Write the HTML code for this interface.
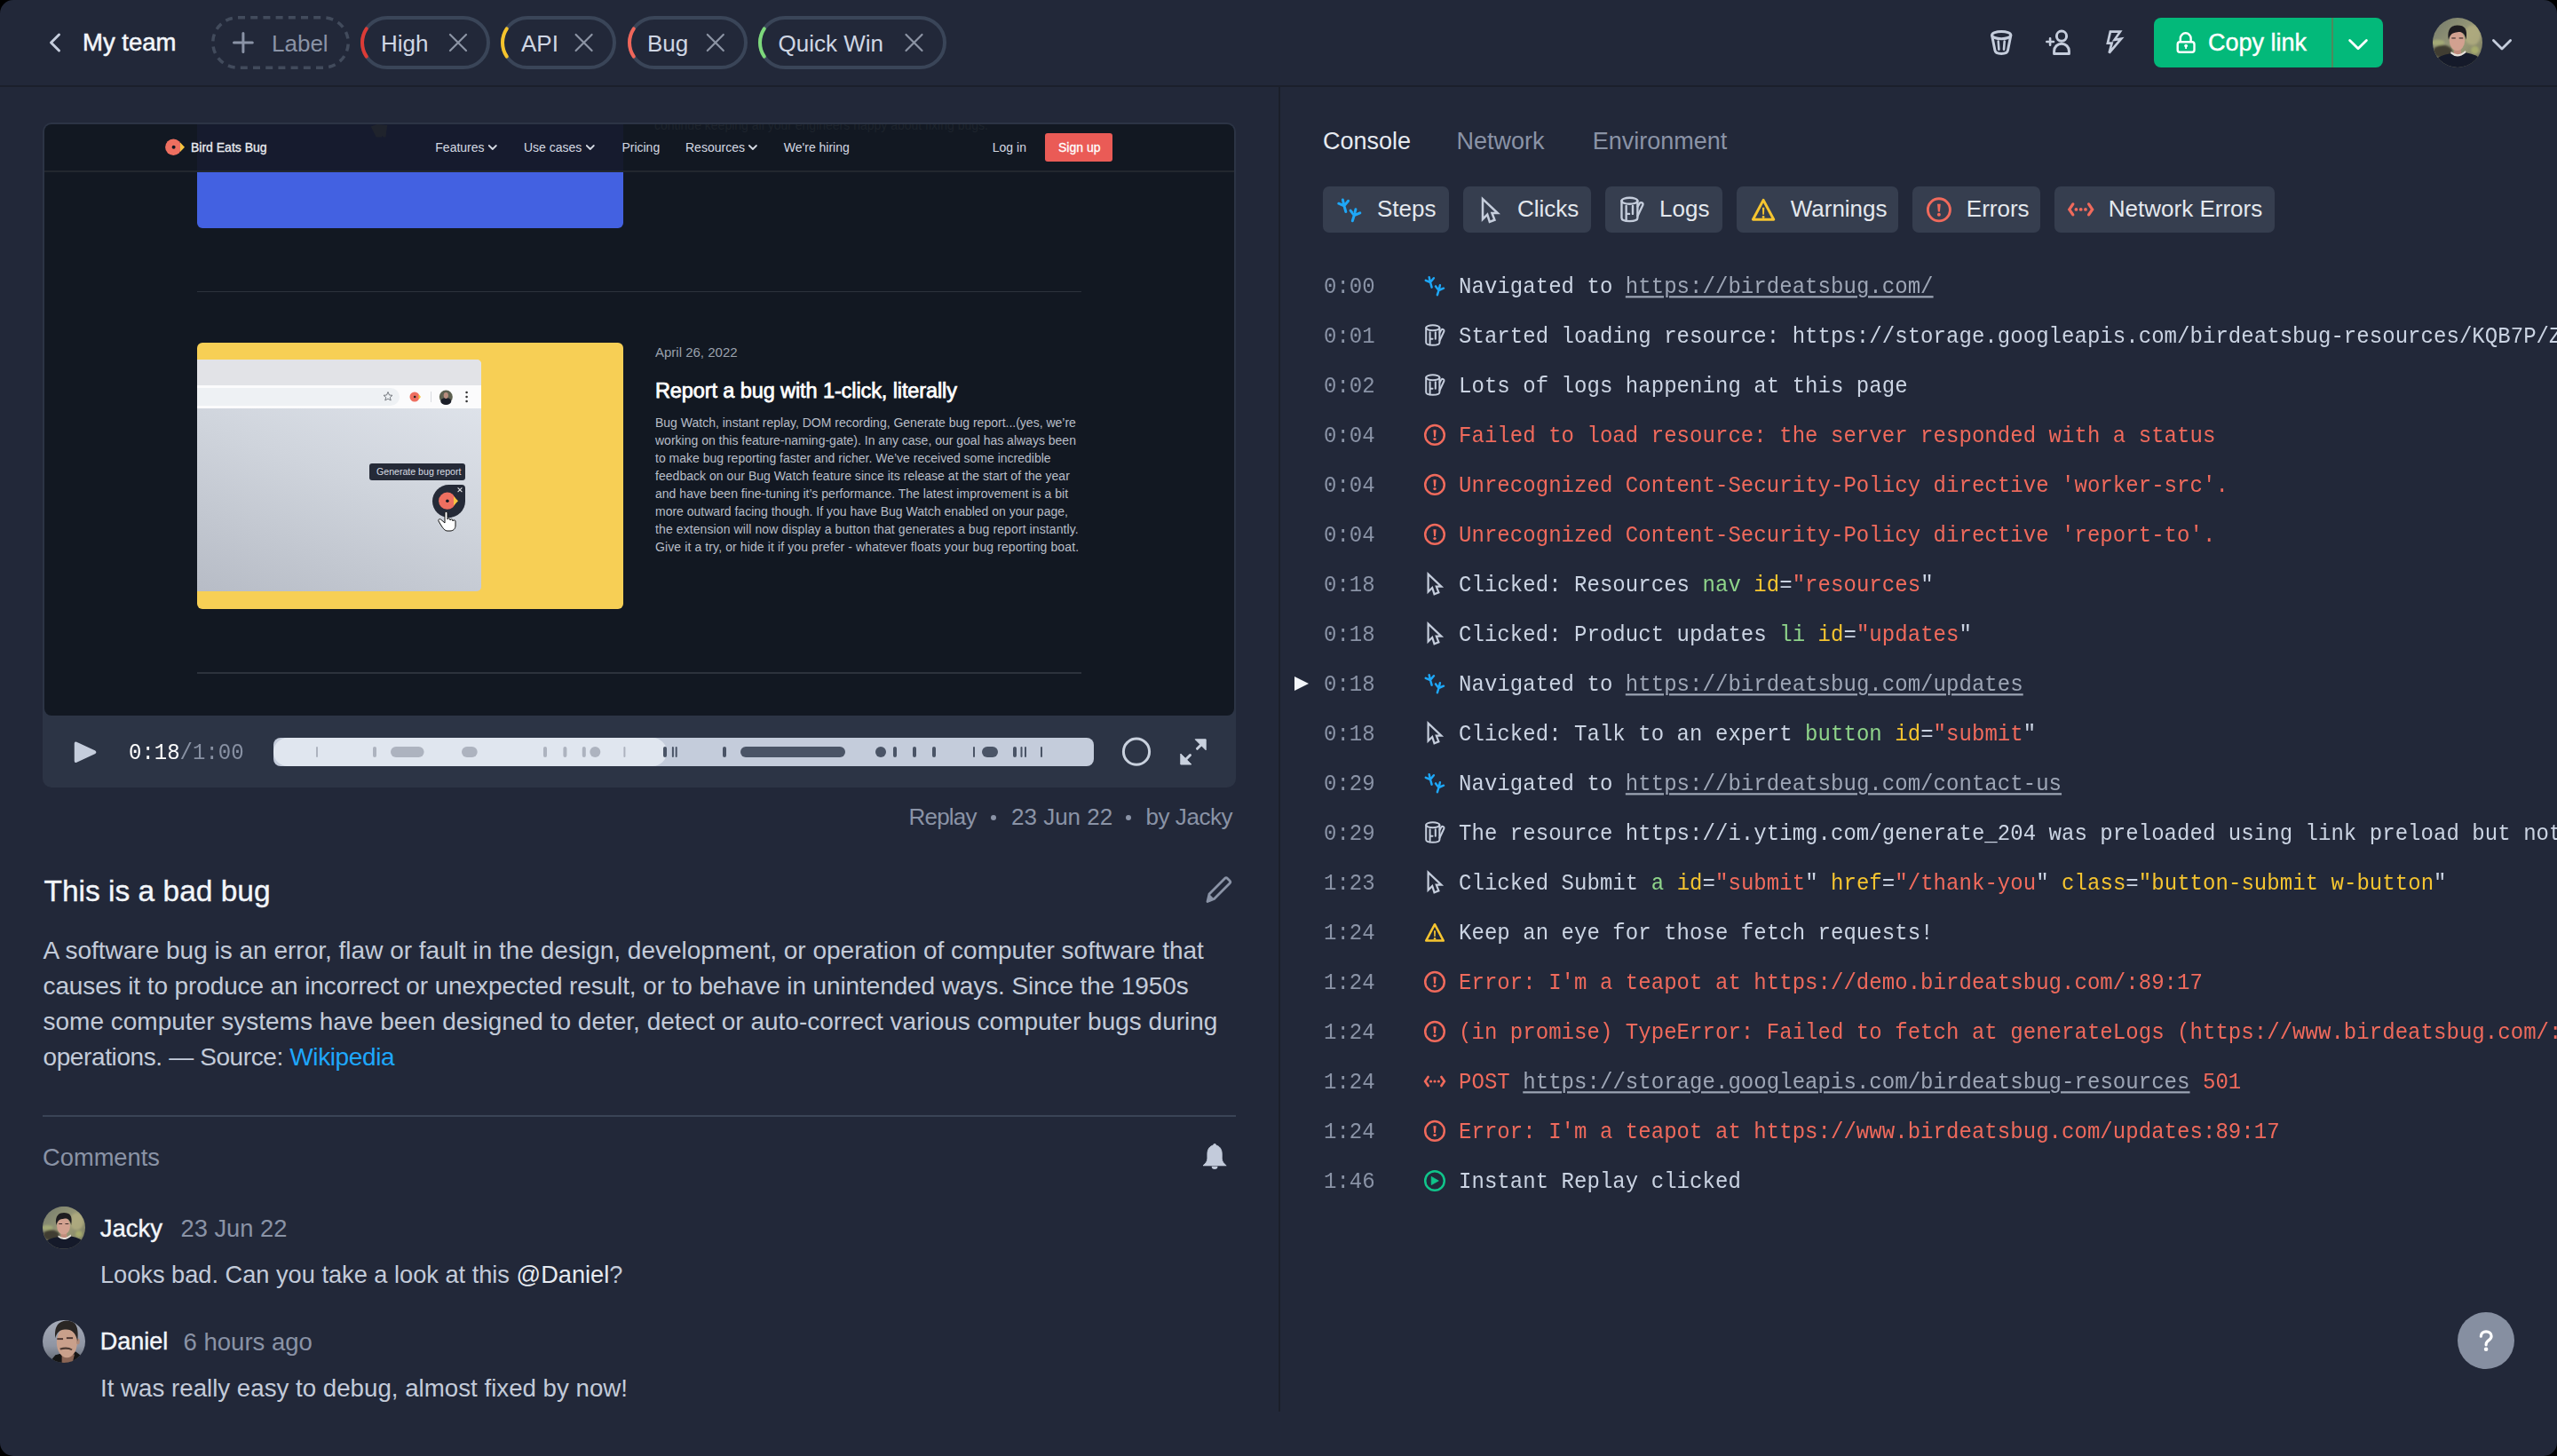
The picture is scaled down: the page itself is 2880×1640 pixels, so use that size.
<!DOCTYPE html>
<html><head><meta charset="utf-8">
<style>
*{margin:0;padding:0;box-sizing:border-box}
html,body{width:2880px;height:1640px;background:#000;overflow:hidden}
body{font-family:"Liberation Sans",sans-serif;position:relative}
#app{position:absolute;left:0;top:0;width:2880px;height:1640px;background:#222839;border-radius:15px;overflow:hidden}
.abs{position:absolute}
.t{position:absolute;white-space:nowrap;line-height:1}
svg.ov{position:absolute;left:0;top:0}
</style></head>
<body><div id="app">
<div class="abs" style="left:0px;top:96px;width:2880px;height:2px;background:#1b1f2b;"></div>
<div class="t" style="left:93.0px;top:34.2px;font-size:27.5px;color:#f3f6fa;-webkit-text-stroke:0.5px #f3f6fa;">My team</div>
<div class="t" style="left:306.0px;top:35.5px;font-size:26px;color:#8a93a6;">Label</div>
<div class="t" style="left:429.0px;top:35.5px;font-size:26px;color:#cfd6e3;">High</div>
<div class="t" style="left:587.0px;top:35.5px;font-size:26px;color:#cfd6e3;">API</div>
<div class="t" style="left:729.0px;top:35.5px;font-size:26px;color:#cfd6e3;">Bug</div>
<div class="t" style="left:876.5px;top:35.5px;font-size:26px;color:#cfd6e3;">Quick Win</div>
<svg class="ov" width="2880" height="100" viewBox="0 0 2880 100">
<path d="M66.5 39 L57.5 48 L66.5 57" fill="none" stroke="#c5cddc" stroke-width="3" stroke-linecap="round" stroke-linejoin="round"/>
<rect x="239.75" y="19.75" width="152.5" height="56.5" rx="28.25" fill="none" stroke="#424b5c" stroke-width="3.5" stroke-dasharray="8 6.2"/>
<path d="M273.9 37.5 V58.5 M263.5 48 H284.3" stroke="#8a93a6" stroke-width="3" stroke-linecap="round"/>
<rect x="408" y="20" width="142" height="56" rx="28" fill="none" stroke="#3a4558" stroke-width="4"/>
<path d="M412.79 32.34 A28 28 0 0 0 412.79 63.66" fill="none" stroke="#dc3b36" stroke-width="4" stroke-linecap="round"/>
<path d="M507 39 L525 57 M525 39 L507 57" stroke="#8c94a4" stroke-width="2.2" stroke-linecap="round"/>
<rect x="566" y="20" width="126" height="56" rx="28" fill="none" stroke="#3a4558" stroke-width="4"/>
<path d="M570.79 32.34 A28 28 0 0 0 570.79 63.66" fill="none" stroke="#f6c42c" stroke-width="4" stroke-linecap="round"/>
<path d="M648.6 39 L666.6 57 M666.6 39 L648.6 57" stroke="#8c94a4" stroke-width="2.2" stroke-linecap="round"/>
<rect x="709" y="20" width="131" height="56" rx="28" fill="none" stroke="#3a4558" stroke-width="4"/>
<path d="M713.79 32.34 A28 28 0 0 0 713.79 63.66" fill="none" stroke="#f0665a" stroke-width="4" stroke-linecap="round"/>
<path d="M796.8 39 L814.8 57 M814.8 39 L796.8 57" stroke="#8c94a4" stroke-width="2.2" stroke-linecap="round"/>
<rect x="856" y="20" width="208" height="56" rx="28" fill="none" stroke="#3a4558" stroke-width="4"/>
<path d="M860.79 32.34 A28 28 0 0 0 860.79 63.66" fill="none" stroke="#7dd87b" stroke-width="4" stroke-linecap="round"/>
<path d="M1020.5 39 L1038.5 57 M1038.5 39 L1020.5 57" stroke="#8c94a4" stroke-width="2.2" stroke-linecap="round"/>
<ellipse cx="2254.2" cy="39.6" rx="10.6" ry="4.1" fill="none" stroke="#c5cddc" stroke-width="3"/>
<path d="M2243.6 40 L2246.9 56.5 C2247.4 59.8 2250.5 60.4 2254.2 60.4 C2257.9 60.4 2261 59.8 2261.5 56.5 L2264.8 40" fill="none" stroke="#c5cddc" stroke-width="3" stroke-linecap="round"/>
<path d="M2250.7 46.5 L2251.4 55.6 M2257.7 46.5 L2257 55.6" stroke="#c5cddc" stroke-width="2.6" stroke-linecap="round"/>
<path d="M2305.3 47 H2313 M2309.1 43.2 V50.8" stroke="#c5cddc" stroke-width="2.6" stroke-linecap="round"/>
<circle cx="2322" cy="40.7" r="5.6" fill="none" stroke="#c5cddc" stroke-width="3"/>
<path d="M2313.6 60.4 L2313.6 57.6 A8.4 8.4 0 0 1 2330.4 57.6 L2330.4 60.4 Z" fill="none" stroke="#c5cddc" stroke-width="3" stroke-linejoin="round"/>
<path d="M2376.9 35.7 L2388 35.7 L2381.6 44.8 L2389.2 43.6 L2375.6 59.6 L2378.6 48.6 L2373.9 48.6 Z" fill="none" stroke="#c5cddc" stroke-width="2.7" stroke-linejoin="miter"/>
</svg>
<div class="abs" style="left:2426px;top:20px;width:258px;height:56px;background:#03b97a;border-radius:8px;"></div>
<div class="abs" style="left:2626px;top:20px;width:2px;height:56px;background:#4e8a5c;"></div>
<div class="t" style="left:2487.0px;top:34.9px;font-size:27px;color:#ffffff;-webkit-text-stroke:0.4px #fff;">Copy link</div>
<svg class="ov" width="2880" height="100" viewBox="0 0 2880 100">
<path d="M2455.8 46.5 V43.2 A5.9 5.9 0 0 1 2467.6 43.2 V46.5" fill="none" stroke="#fff" stroke-width="2.4"/>
<rect x="2452.7" y="47.3" width="18.8" height="11.5" rx="2.6" fill="none" stroke="#fff" stroke-width="2.4"/>
<circle cx="2462.1" cy="51.6" r="1.9" fill="#fff"/><rect x="2461.2" y="51.6" width="1.8" height="3.4" fill="#fff"/>
<path d="M2646.6 45.4 L2656 54.8 L2665.4 45.4" fill="none" stroke="#fff" stroke-width="2.8" stroke-linecap="round" stroke-linejoin="round"/>
<path d="M2808.4 45.4 L2818 55 L2827.6 45.4" fill="none" stroke="#c5cddc" stroke-width="2.8" stroke-linecap="round" stroke-linejoin="round"/>
<defs><clipPath id="chdr"><circle cx="2768" cy="48" r="28"/></clipPath><linearGradient id="ghdr" x1="0" y1="0" x2="1" y2="1"><stop offset="0" stop-color="#747a6c"/><stop offset="0.55" stop-color="#9c9c78"/><stop offset="1" stop-color="#6f7158"/></linearGradient><filter id="fhdr" x="-0.2" y="-0.2" width="1.4" height="1.4"><feGaussianBlur stdDeviation="1.12"/></filter></defs><g clip-path="url(#chdr)"><rect x="2740" y="20" width="56" height="56" fill="url(#ghdr)"/><g filter="url(#fhdr)"><ellipse cx="2784.80" cy="39.60" rx="8.96" ry="11.20" fill="#b1ad80" opacity="0.8"/><ellipse cx="2745.60" cy="48.00" rx="7.84" ry="3.36" fill="#a9b078" opacity="0.8"/><ellipse cx="2751.20" cy="58.08" rx="11.20" ry="7.28" fill="#403d30"/><ellipse cx="2787.60" cy="56.40" rx="4.48" ry="4.48" fill="#adb36e" opacity="0.8"/></g><path d="M2764.64 53.60 L2771.36 53.60 L2772.48 61.44 L2763.52 61.44 Z" fill="#c08c7c"/><path d="M2760.72 58.08 Q2768.00 64.80 2776.96 56.96 L2778.08 62.00 Q2768.00 68.16 2759.60 62.56 Z" fill="#e6e0da"/><path d="M2740.00 76.00 L2742.80 67.60 Q2746.72 62.56 2760.16 60.32 Q2768.00 67.04 2777.52 59.20 Q2790.40 61.44 2796.00 68.16 L2796.00 76.00 Z" fill="#151a2a"/><ellipse cx="2767.44" cy="45.76" rx="8.68" ry="11.20" fill="#d2a190"/><path d="M2757.92 44.64 C2755.68 31.20 2762.40 28.40 2768.00 28.40 C2775.84 28.40 2779.76 32.32 2777.52 44.64 C2775.84 36.80 2772.48 35.68 2768.00 36.24 C2762.40 36.80 2759.60 38.48 2757.92 44.64 Z" fill="#1e1c20"/><rect x="2761.28" y="42.40" width="4.48" height="1.12" fill="#3a2a28"/><rect x="2769.68" y="42.40" width="4.48" height="1.12" fill="#3a2a28"/></g>
</svg>
<div class="abs" style="left:48px;top:138px;width:1344px;height:749px;background:#2c3445;border-radius:10px;"></div>
<div class="abs" style="left:50px;top:140px;width:1340px;height:666px;background:#121822;border-radius:8px;overflow:hidden">
<div class="abs" style="left:172px;top:0px;width:480px;height:52px;background:#161b2e;"></div>
<div class="t" style="left:687.0px;top:-5.9px;font-size:14px;color:#1d232c;">continue keeping all your engineers happy about fixing bugs.</div>
<div class="abs" style="left:0px;top:52px;width:1340px;height:2px;background:#22272f;"></div>
<div class="abs" style="left:172px;top:54px;width:480px;height:63px;background:#4361e1;border-radius:0 0 6px 6px;"></div>
<div class="abs" style="left:172px;top:187.5px;width:996px;height:1.6999999999999886px;background:#2c323c;"></div>
<div class="abs" style="left:172px;top:617px;width:996px;height:2px;background:#2c323c;"></div>
<div class="t" style="left:165.0px;top:19.1px;font-size:14px;color:#eceef2;-webkit-text-stroke:0.3px #eceef2;">Bird Eats Bug</div>
<div class="t" style="left:440.3px;top:19.1px;font-size:14px;color:#d4d9e2;">Features</div>
<div class="t" style="left:540.0px;top:19.1px;font-size:14px;color:#d4d9e2;">Use cases</div>
<div class="t" style="left:650.4px;top:19.1px;font-size:14px;color:#d4d9e2;">Pricing</div>
<div class="t" style="left:722.0px;top:19.1px;font-size:14px;color:#d4d9e2;">Resources</div>
<div class="t" style="left:832.8px;top:19.1px;font-size:14px;color:#d4d9e2;">We&#x27;re hiring</div>
<div class="t" style="left:1067.8px;top:19.1px;font-size:14px;color:#d4d9e2;">Log in</div>
<div class="abs" style="left:1127px;top:10px;width:76px;height:32px;background:#ea5b56;border-radius:3px;"></div>
<div class="t" style="left:1142.0px;top:19.1px;font-size:14px;color:#ffffff;-webkit-text-stroke:0.3px #fff;">Sign up</div>
<div class="abs" style="left:172px;top:245.5px;width:480px;height:300.1px;background:#f7cf55;border-radius:6px;"></div>
<div class="abs" style="left:172px;top:265px;width:319.7px;height:261px;background:linear-gradient(200deg,#e4e8ef 0%,#cfd4dc 50%,#b7bcc6 100%);border-radius:0 5px 5px 0;"></div>
<div class="abs" style="left:172px;top:265px;width:319.7px;height:29px;background:#e2e3e7;border-radius:0 5px 0 0;"></div>
<div class="abs" style="left:172px;top:294px;width:319.7px;height:26.399999999999977px;background:#fbfbfc;"></div>
<div class="abs" style="left:172px;top:297px;width:228px;height:20px;background:#eef1f4;border-radius:0 10px 10px 0;"></div>
<div class="abs" style="left:366.2px;top:381.6px;width:108.10000000000002px;height:19.899999999999977px;background:#252a37;border-radius:3px;"></div>
<div class="t" style="left:374.0px;top:386.0px;font-size:10.6px;color:#d8dce4;">Generate bug report</div>
<div class="abs" style="left:436.5px;top:405.6px;width:37.80000000000001px;height:37.099999999999966px;background:#252a37;border-radius:19px 4px 19px 19px;"></div>
<div class="t" style="left:688.0px;top:248.8px;font-size:15px;color:#9aa1ad;">April 26, 2022</div>
<div class="t" style="left:688.0px;top:289.4px;font-size:23.5px;color:#ffffff;letter-spacing:-0.1px;-webkit-text-stroke:0.75px #fff;">Report a bug with 1-click, literally</div>
<div class="t" style="left:688.0px;top:328.6px;font-size:14px;color:#b8bec8;letter-spacing:0px;">Bug Watch, instant replay, DOM recording, Generate bug report...(yes, we’re</div>
<div class="t" style="left:688.0px;top:348.6px;font-size:14px;color:#b8bec8;letter-spacing:0px;">working on this feature-naming-gate). In any case, our goal has always been</div>
<div class="t" style="left:688.0px;top:368.6px;font-size:14px;color:#b8bec8;letter-spacing:0px;">to make bug reporting faster and richer. We’ve received some incredible</div>
<div class="t" style="left:688.0px;top:388.6px;font-size:14px;color:#b8bec8;letter-spacing:0.037px;">feedback on our Bug Watch feature since its release at the start of the year</div>
<div class="t" style="left:688.0px;top:408.6px;font-size:14px;color:#b8bec8;letter-spacing:0.024px;">and have been fine-tuning it’s performance. The latest improvement is a bit</div>
<div class="t" style="left:688.0px;top:428.6px;font-size:14px;color:#b8bec8;letter-spacing:0px;">more outward facing though. If you have Bug Watch enabled on your page,</div>
<div class="t" style="left:688.0px;top:448.6px;font-size:14px;color:#b8bec8;letter-spacing:0.1px;">the extension will now display a button that generates a bug report instantly.</div>
<div class="t" style="left:688.0px;top:468.6px;font-size:14px;color:#b8bec8;letter-spacing:0.109px;">Give it a try, or hide it if you prefer - whatever floats your bug reporting boat.</div>
<svg class="ov" width="1340" height="666" viewBox="50 140 1340 666">
<circle cx="195.3" cy="165.8" r="9.2" fill="#ee6f60"/><path d="M203 160.5 L208 165.8 L203 171 Z" fill="#f6c440"/><circle cx="195.6" cy="165.8" r="2" fill="#121822"/>
<path d="M550.8 164 L554.8 168 L558.8 164" fill="none" stroke="#d4d9e2" stroke-width="1.8" stroke-linecap="round" stroke-linejoin="round"/>
<path d="M660.8 164 L664.8 168 L668.8 164" fill="none" stroke="#d4d9e2" stroke-width="1.8" stroke-linecap="round" stroke-linejoin="round"/>
<path d="M843.9 164 L847.9 168 L851.9 164" fill="none" stroke="#d4d9e2" stroke-width="1.8" stroke-linecap="round" stroke-linejoin="round"/>
<path d="M437 441.5 L438.5 445 L442 445.3 L439.3 447.6 L440.2 451 L437 449.1 L433.8 451 L434.7 447.6 L432 445.3 L435.5 445 Z" fill="none" stroke="#6b6f76" stroke-width="0.9"/>
<circle cx="467" cy="447" r="5.5" fill="#ee6f60"/><path d="M471.5 444 L474 447 L471.5 450 Z" fill="#f6c440"/><circle cx="467.2" cy="447" r="1.3" fill="#222"/>
<rect x="485" y="441" width="1" height="12" fill="#d9dbe0"/>
<circle cx="502.3" cy="447" r="7.5" fill="#5d6050"/><ellipse cx="502.3" cy="452" rx="6" ry="4" fill="#1b1e28"/><ellipse cx="502.3" cy="445.5" rx="2.6" ry="3.4" fill="#b88d7f"/>
<circle cx="525.6" cy="442" r="1.3" fill="#333"/><circle cx="525.6" cy="447" r="1.3" fill="#333"/><circle cx="525.6" cy="452" r="1.3" fill="#333"/>
<circle cx="503.7" cy="564.2" r="9.6" fill="#ee6f60"/><path d="M511 559 L516 564.2 L511 569.4 Z" fill="#f6c440"/><circle cx="503.9" cy="564.2" r="1.8" fill="#121822"/>
<path d="M515.6 549.4 L520.4 554.2 M520.4 549.4 L515.6 554.2" stroke="#e8e8ea" stroke-width="1.1"/>
<path d="M501 578 C501 576 504 576 504 578 L504 585 C504 583.5 507 583.5 507 585 L507 586 C507 584.5 510 584.5 510 586 L510 587 C510 585.5 513 585.5 513 587 L513 592 C513 596 510 598 507 598 L504 598 C501 598 499 595 497 592 L494 587 C493 585 495.5 584 497 585.5 L501 589 Z" fill="#fff" stroke="#111" stroke-width="1"/>
<path d="M417.6 142.5 L423.8 154.5 L429.8 154.5 L430.6 153 L432 154.5 L434.5 154.5 L436.2 141 L425 140 Z" fill="#1f232c"/>
</svg>
</div>
<svg class="ov" width="1440" height="1640" viewBox="0 0 1440 1640">
<path d="M86 836.5 Q84.5 835.8 84.5 837.5 L84.5 857 Q84.5 858.7 86 858 L107 848.3 Q108.2 847.2 107 846.3 Z" fill="#c5cddc" stroke="#c5cddc" stroke-width="1.5" stroke-linejoin="round"/>
<rect x="308" y="831" width="924" height="32" rx="8" fill="#c4ccdb"/>
<rect x="308" y="831" width="443" height="32" rx="16" fill="#e0e6ef"/>
<rect x="356.0" y="841.0" width="2" height="12" rx="1.0" fill="#adb3bf"/>
<rect x="420.0" y="841.0" width="4" height="12" rx="2.0" fill="#adb3bf"/>
<rect x="440" y="841.0" width="37.60000000000002" height="12" rx="6.0" fill="#adb3bf"/>
<rect x="520" y="841.0" width="17.700000000000045" height="12" rx="6.0" fill="#adb3bf"/>
<rect x="612.0" y="841.0" width="4" height="12" rx="2.0" fill="#adb3bf"/>
<rect x="634.4" y="841.0" width="4" height="12" rx="2.0" fill="#adb3bf"/>
<rect x="655.8" y="841.0" width="4" height="12" rx="2.0" fill="#adb3bf"/>
<circle cx="670.3" cy="847" r="6" fill="#adb3bf"/>
<rect x="702.4" y="841.0" width="2" height="12" rx="1.0" fill="#adb3bf"/>
<rect x="747.0" y="841.0" width="4" height="12" rx="2.0" fill="#4a5466"/>
<rect x="756.9" y="841.0" width="2" height="12" rx="1.0" fill="#4a5466"/>
<rect x="760.7" y="841.0" width="2" height="12" rx="1.0" fill="#4a5466"/>
<rect x="814.0" y="841.0" width="4" height="12" rx="2.0" fill="#4a5466"/>
<rect x="834" y="841.0" width="118" height="12" rx="6.0" fill="#4a5466"/>
<circle cx="992" cy="847" r="6" fill="#4a5466"/>
<rect x="1006.0" y="841.0" width="4" height="12" rx="2.0" fill="#4a5466"/>
<rect x="1028.0" y="841.0" width="4" height="12" rx="2.0" fill="#4a5466"/>
<rect x="1050.0" y="841.0" width="4" height="12" rx="2.0" fill="#4a5466"/>
<rect x="1096.0" y="841.0" width="2" height="12" rx="1.0" fill="#4a5466"/>
<rect x="1106" y="841.0" width="18" height="12" rx="6.0" fill="#4a5466"/>
<rect x="1141.0" y="841.0" width="4" height="12" rx="2.0" fill="#4a5466"/>
<rect x="1149.5" y="841.0" width="2" height="12" rx="1.0" fill="#4a5466"/>
<rect x="1154.0" y="841.0" width="2" height="12" rx="1.0" fill="#4a5466"/>
<rect x="1172.0" y="841.0" width="2" height="12" rx="1.0" fill="#4a5466"/>
<circle cx="1280" cy="846.7" r="14.6" fill="none" stroke="#c9d1de" stroke-width="3"/>
<path d="M1346.2 832.8 L1358.2 832.8 L1358.2 844.8 Z" fill="#c9d1de" stroke="#c9d1de" stroke-width="1" stroke-linejoin="round"/><path d="M1348.5 843.3 L1354 837.8" stroke="#c9d1de" stroke-width="3" stroke-linecap="round"/>
<path d="M1329.8 849 L1329.8 861 L1341.8 861 Z" fill="#c9d1de" stroke="#c9d1de" stroke-width="1" stroke-linejoin="round"/><path d="M1340.5 850.5 L1335 856" stroke="#c9d1de" stroke-width="3" stroke-linecap="round"/>
<path d="M1360 1015.5 L1362 1007 L1379.5 989.5 Q1381 988 1382.5 989.5 L1385 992 Q1386.5 993.5 1385 995 L1367.5 1012.5 Z" fill="none" stroke="#8a93a6" stroke-width="2.8" stroke-linejoin="round"/><path d="M1360 1015.5 L1362 1007 L1367.5 1012.5 Z" fill="#8a93a6"/>
<path d="M1368.1 1289.8 C1362.5 1290.2 1359.9 1294.5 1359.9 1300 L1359.9 1304.8 C1359.9 1308.3 1357.8 1310.5 1355 1312.9 L1381.2 1312.9 C1378.4 1310.5 1376.3 1308.3 1376.3 1304.8 L1376.3 1300 C1376.3 1294.5 1373.7 1290.2 1368.1 1289.8 Z" fill="#c3cbdb" stroke="#c3cbdb" stroke-width="0.8" stroke-linejoin="round"/><circle cx="1368.1" cy="1289.6" r="1.7" fill="#c3cbdb"/><path d="M1364.7 1313.8 A3.4 3.3 0 0 0 1371.5 1313.8 Z" fill="#c3cbdb"/>
<defs><clipPath id="ccj"><circle cx="72" cy="1382.8" r="24"/></clipPath><linearGradient id="gcj" x1="0" y1="0" x2="1" y2="1"><stop offset="0" stop-color="#747a6c"/><stop offset="0.55" stop-color="#9c9c78"/><stop offset="1" stop-color="#6f7158"/></linearGradient><filter id="fcj" x="-0.2" y="-0.2" width="1.4" height="1.4"><feGaussianBlur stdDeviation="0.96"/></filter></defs><g clip-path="url(#ccj)"><rect x="48" y="1358.8" width="48" height="48" fill="url(#gcj)"/><g filter="url(#fcj)"><ellipse cx="86.40" cy="1375.60" rx="7.68" ry="9.60" fill="#b1ad80" opacity="0.8"/><ellipse cx="52.80" cy="1382.80" rx="6.72" ry="2.88" fill="#a9b078" opacity="0.8"/><ellipse cx="57.60" cy="1391.44" rx="9.60" ry="6.24" fill="#403d30"/><ellipse cx="88.80" cy="1390.00" rx="3.84" ry="3.84" fill="#adb36e" opacity="0.8"/></g><path d="M69.12 1387.60 L74.88 1387.60 L75.84 1394.32 L68.16 1394.32 Z" fill="#c08c7c"/><path d="M65.76 1391.44 Q72.00 1397.20 79.68 1390.48 L80.64 1394.80 Q72.00 1400.08 64.80 1395.28 Z" fill="#e6e0da"/><path d="M48.00 1406.80 L50.40 1399.60 Q53.76 1395.28 65.28 1393.36 Q72.00 1399.12 80.16 1392.40 Q91.20 1394.32 96.00 1400.08 L96.00 1406.80 Z" fill="#151a2a"/><ellipse cx="71.52" cy="1380.88" rx="7.44" ry="9.60" fill="#d2a190"/><path d="M63.36 1379.92 C61.44 1368.40 67.20 1366.00 72.00 1366.00 C78.72 1366.00 82.08 1369.36 80.16 1379.92 C78.72 1373.20 75.84 1372.24 72.00 1372.72 C67.20 1373.20 64.80 1374.64 63.36 1379.92 Z" fill="#1e1c20"/><rect x="66.24" y="1378.00" width="3.84" height="0.96" fill="#3a2a28"/><rect x="73.44" y="1378.00" width="3.84" height="0.96" fill="#3a2a28"/></g>
<defs><clipPath id="ccd"><circle cx="72" cy="1511" r="24"/></clipPath><linearGradient id="gcd" x1="0" y1="0" x2="0" y2="1"><stop offset="0" stop-color="#a5abb9"/><stop offset="0.6" stop-color="#8f95a3"/><stop offset="1" stop-color="#5f6570"/></linearGradient></defs><g clip-path="url(#ccd)"><rect x="48" y="1487" width="48" height="48" fill="url(#gcd)"/><path d="M55.20 1535.00 L62.40 1526.36 Q72.00 1523.48 85.44 1522.52 L92.16 1527.80 L93.60 1535.00 Z" fill="#151515"/><path d="M69.60 1525.40 L84.00 1525.40 L81.60 1535.00 L69.60 1535.00 Z" fill="#8a6555"/><ellipse cx="75.36" cy="1511.96" rx="11.52" ry="17.28" fill="#c9a08b"/><ellipse cx="87.84" cy="1511.00" rx="1.92" ry="3.36" fill="#b08a78"/><path d="M62.40 1507.16 C60.48 1491.80 68.16 1487.48 75.84 1487.48 C84.48 1487.48 89.28 1492.76 87.36 1511.00 C85.44 1500.44 79.68 1496.60 72.96 1497.56 C67.20 1497.56 63.84 1501.40 62.40 1507.16 Z" fill="#2a2624"/><rect x="64.32" y="1507.16" width="6.72" height="1.92" fill="#4a3530"/><rect x="74.88" y="1506.20" width="7.20" height="1.92" fill="#4a3530"/><path d="M67.20 1518.68 Q75.84 1515.80 81.60 1519.64 L80.64 1521.08 Q74.88 1518.68 68.16 1520.60 Z" fill="#4b3a32"/></g>
</svg>
<div class="t" style="left:145.0px;top:836.7px;font-size:24px;color:#ffffff;font-family:'Liberation Mono',monospace;transform:scaleY(1.1);transform-origin:0 18.4px;">0:18<span style="color:#8891a3">/1:00</span></div>
<div class="t" style="left:1023.5px;top:907.1px;font-size:26px;color:#8a93a6;letter-spacing:-0.8px;">Replay</div>
<div class="abs" style="left:1116px;top:918px;width:6px;height:6px;background:#8a93a6;border-radius:3px;"></div>
<div class="t" style="left:1139.0px;top:907.1px;font-size:26px;color:#8a93a6;">23 Jun 22</div>
<div class="abs" style="left:1268px;top:918px;width:6px;height:6px;background:#8a93a6;border-radius:3px;"></div>
<div class="t" style="left:1290.5px;top:907.1px;font-size:26px;color:#8a93a6;letter-spacing:-0.45px;">by Jacky</div>
<div class="t" style="left:49.5px;top:987.0px;font-size:33.5px;color:#f3f6fa;-webkit-text-stroke:0.35px #f3f6fa;">This is a bad bug</div>
<div class="t" style="left:48.5px;top:1057.3px;font-size:28px;color:#c3cbd9;letter-spacing:0px;">A software bug is an error, flaw or fault in the design, development, or operation of computer software that</div>
<div class="t" style="left:48.5px;top:1097.1px;font-size:28px;color:#c3cbd9;letter-spacing:-0.107px;">causes it to produce an incorrect or unexpected result, or to behave in unintended ways. Since the 1950s</div>
<div class="t" style="left:48.5px;top:1136.9px;font-size:28px;color:#c3cbd9;letter-spacing:0px;">some computer systems have been designed to deter, detect or auto-correct various computer bugs during</div>
<div class="t" style="left:48.5px;top:1176.7px;font-size:28px;color:#c3cbd9;letter-spacing:-0.39px;">operations. — Source: <span style="color:#1ea7fd">Wikipedia</span></div>
<div class="abs" style="left:48px;top:1256px;width:1344px;height:2px;background:#3a4456;"></div>
<div class="t" style="left:48.0px;top:1289.9px;font-size:27.3px;color:#8a93a6;">Comments</div>
<div class="t" style="left:112.7px;top:1370.2px;font-size:27.5px;color:#f3f6fa;-webkit-text-stroke:0.4px #f3f6fa;">Jacky</div>
<div class="t" style="left:203.5px;top:1370.4px;font-size:27.3px;color:#8a93a6;">23 Jun 22</div>
<div class="t" style="left:113.0px;top:1421.7px;font-size:27.2px;color:#c3cbd9;">Looks bad. Can you take a look at this <span style="color:#e6eaf0">@Daniel</span>?</div>
<div class="t" style="left:112.7px;top:1498.3px;font-size:27px;color:#f3f6fa;-webkit-text-stroke:0.4px #f3f6fa;">Daniel</div>
<div class="t" style="left:206.6px;top:1497.5px;font-size:27.5px;color:#8a93a6;">6 hours ago</div>
<div class="t" style="left:113.0px;top:1549.8px;font-size:27.7px;color:#c3cbd9;">It was really easy to debug, almost fixed by now!</div>
<div class="abs" style="left:1440px;top:98px;width:2px;height:1492px;background:#1b1f2a;"></div>
<div class="t" style="left:1490.0px;top:146.3px;font-size:27px;color:#e6eaf0;">Console</div>
<div class="t" style="left:1640.6px;top:146.3px;font-size:27px;color:#8a93a6;">Network</div>
<div class="t" style="left:1793.8px;top:146.3px;font-size:27px;color:#8a93a6;">Environment</div>
<div class="abs" style="left:1490px;top:210.3px;width:141.70000000000005px;height:51.30000000000001px;background:#363e4f;border-radius:7px;"></div>
<div class="t" style="left:1551.0px;top:222.1px;font-size:26px;color:#e4e8ee;">Steps</div>
<div class="abs" style="left:1648px;top:210.3px;width:143.5px;height:51.30000000000001px;background:#363e4f;border-radius:7px;"></div>
<div class="t" style="left:1709.0px;top:222.1px;font-size:26px;color:#e4e8ee;">Clicks</div>
<div class="abs" style="left:1808px;top:210.3px;width:131.5999999999999px;height:51.30000000000001px;background:#363e4f;border-radius:7px;"></div>
<div class="t" style="left:1869.0px;top:222.1px;font-size:26px;color:#e4e8ee;">Logs</div>
<div class="abs" style="left:1956px;top:210.3px;width:182px;height:51.30000000000001px;background:#363e4f;border-radius:7px;"></div>
<div class="t" style="left:2016.7px;top:222.1px;font-size:26px;color:#e4e8ee;">Warnings</div>
<div class="abs" style="left:2154px;top:210.3px;width:144px;height:51.30000000000001px;background:#363e4f;border-radius:7px;"></div>
<div class="t" style="left:2214.8px;top:222.1px;font-size:26px;color:#e4e8ee;">Errors</div>
<div class="abs" style="left:2313.7px;top:210.3px;width:248.10000000000036px;height:51.30000000000001px;background:#363e4f;border-radius:7px;"></div>
<div class="t" style="left:2374.8px;top:222.1px;font-size:26px;color:#e4e8ee;">Network Errors</div>
<div class="t" style="left:1491.0px;top:311.5px;font-size:24px;color:#8a93a6;font-family:'Liberation Mono',monospace;transform:scaleY(1.1);transform-origin:0 18.4px;">0:00</div>
<div class="t" style="left:1643.0px;top:311.5px;font-size:24px;color:#cbd4e3;font-family:'Liberation Mono',monospace;letter-spacing:0.045px;transform:scaleY(1.1);transform-origin:0 18.4px;"><span style="color:#cbd4e3">Navigated to </span><span style="color:#9ea6b6;text-decoration:underline;text-decoration-thickness:1.5px;text-underline-offset:3px">https://birdeatsbug.com/</span></div>
<div class="t" style="left:1491.0px;top:367.5px;font-size:24px;color:#8a93a6;font-family:'Liberation Mono',monospace;transform:scaleY(1.1);transform-origin:0 18.4px;">0:01</div>
<div class="t" style="left:1643.0px;top:367.5px;font-size:24px;color:#cbd4e3;font-family:'Liberation Mono',monospace;letter-spacing:0.045px;transform:scaleY(1.1);transform-origin:0 18.4px;"><span style="color:#cbd4e3">Started loading resource: https://storage.googleapis.com/birdeatsbug-resources/KQB7P/Z</span></div>
<div class="t" style="left:1491.0px;top:423.5px;font-size:24px;color:#8a93a6;font-family:'Liberation Mono',monospace;transform:scaleY(1.1);transform-origin:0 18.4px;">0:02</div>
<div class="t" style="left:1643.0px;top:423.5px;font-size:24px;color:#cbd4e3;font-family:'Liberation Mono',monospace;letter-spacing:0.045px;transform:scaleY(1.1);transform-origin:0 18.4px;"><span style="color:#cbd4e3">Lots of logs happening at this page</span></div>
<div class="t" style="left:1491.0px;top:479.5px;font-size:24px;color:#8a93a6;font-family:'Liberation Mono',monospace;transform:scaleY(1.1);transform-origin:0 18.4px;">0:04</div>
<div class="t" style="left:1643.0px;top:479.5px;font-size:24px;color:#cbd4e3;font-family:'Liberation Mono',monospace;letter-spacing:0.045px;transform:scaleY(1.1);transform-origin:0 18.4px;"><span style="color:#f06a5c">Failed to load resource: the server responded with a status</span></div>
<div class="t" style="left:1491.0px;top:535.5px;font-size:24px;color:#8a93a6;font-family:'Liberation Mono',monospace;transform:scaleY(1.1);transform-origin:0 18.4px;">0:04</div>
<div class="t" style="left:1643.0px;top:535.5px;font-size:24px;color:#cbd4e3;font-family:'Liberation Mono',monospace;letter-spacing:0.045px;transform:scaleY(1.1);transform-origin:0 18.4px;"><span style="color:#f06a5c">Unrecognized Content-Security-Policy directive &#x27;worker-src&#x27;.</span></div>
<div class="t" style="left:1491.0px;top:591.5px;font-size:24px;color:#8a93a6;font-family:'Liberation Mono',monospace;transform:scaleY(1.1);transform-origin:0 18.4px;">0:04</div>
<div class="t" style="left:1643.0px;top:591.5px;font-size:24px;color:#cbd4e3;font-family:'Liberation Mono',monospace;letter-spacing:0.045px;transform:scaleY(1.1);transform-origin:0 18.4px;"><span style="color:#f06a5c">Unrecognized Content-Security-Policy directive &#x27;report-to&#x27;.</span></div>
<div class="t" style="left:1491.0px;top:647.5px;font-size:24px;color:#8a93a6;font-family:'Liberation Mono',monospace;transform:scaleY(1.1);transform-origin:0 18.4px;">0:18</div>
<div class="t" style="left:1643.0px;top:647.5px;font-size:24px;color:#cbd4e3;font-family:'Liberation Mono',monospace;letter-spacing:0.045px;transform:scaleY(1.1);transform-origin:0 18.4px;"><span style="color:#cbd4e3">Clicked: Resources </span><span style="color:#8fd48a">nav</span><span style="color:#cbd4e3"> </span><span style="color:#f6c530">id</span><span style="color:#cbd4e3">=</span><span style="color:#f26b5d">&quot;resources</span><span style="color:#cbd4e3">&quot;</span></div>
<div class="t" style="left:1491.0px;top:703.5px;font-size:24px;color:#8a93a6;font-family:'Liberation Mono',monospace;transform:scaleY(1.1);transform-origin:0 18.4px;">0:18</div>
<div class="t" style="left:1643.0px;top:703.5px;font-size:24px;color:#cbd4e3;font-family:'Liberation Mono',monospace;letter-spacing:0.045px;transform:scaleY(1.1);transform-origin:0 18.4px;"><span style="color:#cbd4e3">Clicked: Product updates </span><span style="color:#8fd48a">li</span><span style="color:#cbd4e3"> </span><span style="color:#f6c530">id</span><span style="color:#cbd4e3">=</span><span style="color:#f26b5d">&quot;updates</span><span style="color:#cbd4e3">&quot;</span></div>
<div class="t" style="left:1491.0px;top:759.5px;font-size:24px;color:#8a93a6;font-family:'Liberation Mono',monospace;transform:scaleY(1.1);transform-origin:0 18.4px;">0:18</div>
<div class="t" style="left:1643.0px;top:759.5px;font-size:24px;color:#cbd4e3;font-family:'Liberation Mono',monospace;letter-spacing:0.045px;transform:scaleY(1.1);transform-origin:0 18.4px;"><span style="color:#cbd4e3">Navigated to </span><span style="color:#9ea6b6;text-decoration:underline;text-decoration-thickness:1.5px;text-underline-offset:3px">https://birdeatsbug.com/updates</span></div>
<div class="t" style="left:1491.0px;top:815.5px;font-size:24px;color:#8a93a6;font-family:'Liberation Mono',monospace;transform:scaleY(1.1);transform-origin:0 18.4px;">0:18</div>
<div class="t" style="left:1643.0px;top:815.5px;font-size:24px;color:#cbd4e3;font-family:'Liberation Mono',monospace;letter-spacing:0.045px;transform:scaleY(1.1);transform-origin:0 18.4px;"><span style="color:#cbd4e3">Clicked: Talk to an expert </span><span style="color:#8fd48a">button</span><span style="color:#cbd4e3"> </span><span style="color:#f6c530">id</span><span style="color:#cbd4e3">=</span><span style="color:#f26b5d">&quot;submit</span><span style="color:#cbd4e3">&quot;</span></div>
<div class="t" style="left:1491.0px;top:871.5px;font-size:24px;color:#8a93a6;font-family:'Liberation Mono',monospace;transform:scaleY(1.1);transform-origin:0 18.4px;">0:29</div>
<div class="t" style="left:1643.0px;top:871.5px;font-size:24px;color:#cbd4e3;font-family:'Liberation Mono',monospace;letter-spacing:0.045px;transform:scaleY(1.1);transform-origin:0 18.4px;"><span style="color:#cbd4e3">Navigated to </span><span style="color:#9ea6b6;text-decoration:underline;text-decoration-thickness:1.5px;text-underline-offset:3px">https://birdeatsbug.com/contact-us</span></div>
<div class="t" style="left:1491.0px;top:927.5px;font-size:24px;color:#8a93a6;font-family:'Liberation Mono',monospace;transform:scaleY(1.1);transform-origin:0 18.4px;">0:29</div>
<div class="t" style="left:1643.0px;top:927.5px;font-size:24px;color:#cbd4e3;font-family:'Liberation Mono',monospace;letter-spacing:0.045px;transform:scaleY(1.1);transform-origin:0 18.4px;"><span style="color:#cbd4e3">The resource https://i.ytimg.com/generate_204 was preloaded using link preload but not used</span></div>
<div class="t" style="left:1491.0px;top:983.5px;font-size:24px;color:#8a93a6;font-family:'Liberation Mono',monospace;transform:scaleY(1.1);transform-origin:0 18.4px;">1:23</div>
<div class="t" style="left:1643.0px;top:983.5px;font-size:24px;color:#cbd4e3;font-family:'Liberation Mono',monospace;letter-spacing:0.045px;transform:scaleY(1.1);transform-origin:0 18.4px;"><span style="color:#cbd4e3">Clicked Submit </span><span style="color:#8fd48a">a</span><span style="color:#cbd4e3"> </span><span style="color:#f6c530">id</span><span style="color:#cbd4e3">=</span><span style="color:#f26b5d">&quot;submit</span><span style="color:#cbd4e3">&quot; </span><span style="color:#f6c530">href</span><span style="color:#cbd4e3">=</span><span style="color:#f26b5d">&quot;/thank-you</span><span style="color:#cbd4e3">&quot; </span><span style="color:#f6c530">class</span><span style="color:#cbd4e3">=</span><span style="color:#f6c530">&quot;button-submit w-button</span><span style="color:#cbd4e3">&quot;</span></div>
<div class="t" style="left:1491.0px;top:1039.5px;font-size:24px;color:#8a93a6;font-family:'Liberation Mono',monospace;transform:scaleY(1.1);transform-origin:0 18.4px;">1:24</div>
<div class="t" style="left:1643.0px;top:1039.5px;font-size:24px;color:#cbd4e3;font-family:'Liberation Mono',monospace;letter-spacing:0.045px;transform:scaleY(1.1);transform-origin:0 18.4px;"><span style="color:#cbd4e3">Keep an eye for those fetch requests!</span></div>
<div class="t" style="left:1491.0px;top:1095.5px;font-size:24px;color:#8a93a6;font-family:'Liberation Mono',monospace;transform:scaleY(1.1);transform-origin:0 18.4px;">1:24</div>
<div class="t" style="left:1643.0px;top:1095.5px;font-size:24px;color:#cbd4e3;font-family:'Liberation Mono',monospace;letter-spacing:0.045px;transform:scaleY(1.1);transform-origin:0 18.4px;"><span style="color:#f06a5c">Error: I&#x27;m a teapot at https://demo.birdeatsbug.com/:89:17</span></div>
<div class="t" style="left:1491.0px;top:1151.5px;font-size:24px;color:#8a93a6;font-family:'Liberation Mono',monospace;transform:scaleY(1.1);transform-origin:0 18.4px;">1:24</div>
<div class="t" style="left:1643.0px;top:1151.5px;font-size:24px;color:#cbd4e3;font-family:'Liberation Mono',monospace;letter-spacing:0.045px;transform:scaleY(1.1);transform-origin:0 18.4px;"><span style="color:#f06a5c">(in promise) TypeError: Failed to fetch at generateLogs (https://www.birdeatsbug.com/:89:17)</span></div>
<div class="t" style="left:1491.0px;top:1207.5px;font-size:24px;color:#8a93a6;font-family:'Liberation Mono',monospace;transform:scaleY(1.1);transform-origin:0 18.4px;">1:24</div>
<div class="t" style="left:1643.0px;top:1207.5px;font-size:24px;color:#cbd4e3;font-family:'Liberation Mono',monospace;letter-spacing:0.045px;transform:scaleY(1.1);transform-origin:0 18.4px;"><span style="color:#f06a5c">POST </span><span style="color:#9ea6b6;text-decoration:underline;text-decoration-thickness:1.5px;text-underline-offset:3px">https://storage.googleapis.com/birdeatsbug-resources</span><span style="color:#f06a5c"> 501</span></div>
<div class="t" style="left:1491.0px;top:1263.5px;font-size:24px;color:#8a93a6;font-family:'Liberation Mono',monospace;transform:scaleY(1.1);transform-origin:0 18.4px;">1:24</div>
<div class="t" style="left:1643.0px;top:1263.5px;font-size:24px;color:#cbd4e3;font-family:'Liberation Mono',monospace;letter-spacing:0.045px;transform:scaleY(1.1);transform-origin:0 18.4px;"><span style="color:#f06a5c">Error: I&#x27;m a teapot at https://www.birdeatsbug.com/updates:89:17</span></div>
<div class="t" style="left:1491.0px;top:1319.5px;font-size:24px;color:#8a93a6;font-family:'Liberation Mono',monospace;transform:scaleY(1.1);transform-origin:0 18.4px;">1:46</div>
<div class="t" style="left:1643.0px;top:1319.5px;font-size:24px;color:#cbd4e3;font-family:'Liberation Mono',monospace;letter-spacing:0.045px;transform:scaleY(1.1);transform-origin:0 18.4px;"><span style="color:#cbd4e3">Instant Replay clicked</span></div>
<svg class="ov" width="2880" height="1640" viewBox="0 0 2880 1640">
<g transform="translate(1506.8,223.5) scale(1.19) translate(-1605,-311)"><g transform="translate(0.00,0.00)" fill="none" stroke="#1ea7f7" stroke-width="2.5" stroke-linecap="round" stroke-linejoin="round"><path d="M1612.6 323.6 L1611 318 L1605.8 315.8 M1611 318 L1609.7 312.3 M1611 318 L1614.9 313.3"/><path d="M1618.9 332.2 L1620.5 327 L1617 322.4 M1620.5 327 L1621.9 321.3 M1620.5 327 L1626 324.7"/></g>
</g><g transform="translate(1669.3,223.2) scale(1.14) translate(-1608,-645.8)"><g transform="translate(0.00,0.00)"><path d="M1608.6 646.6 L1608.6 666.6 L1613.2 662 L1615.5 669.2 L1620.4 667.3 L1617.8 660.6 L1623.4 660.6 Z" fill="none" stroke="#c5cddc" stroke-width="2.2" stroke-linejoin="miter"/></g>
</g><g transform="translate(1825.4,222) scale(1.18) translate(-1605.3,-366)"><g transform="translate(0.00,0.00)" fill="none" stroke="#c5cddc" stroke-width="2" stroke-linecap="round" stroke-linejoin="round"><ellipse cx="1613.8" cy="369.6" rx="7.6" ry="3"/><path d="M1606.2 369.6 V386 C1606.2 390 1621.4 390 1621.4 386 V369.6"/><path d="M1610.6 374.5 V388.5 M1616.8 374.5 V382 M1610.6 382 H1613.5"/><path d="M1621.6 375 L1623.5 371.8 C1624.5 370.5 1627.2 371.5 1626.4 373.6 L1621.5 384"/></g>
</g><g transform="translate(1986.1,237) scale(1.19) translate(-1616,-1051)"><path d="M1616 1041.2 L1625.8 1059.6 L1606.2 1059.6 Z" fill="none" stroke="#f6c530" stroke-width="2.5" stroke-linejoin="round"/><path d="M1615 1048.2 L1617 1048.2 L1616.7 1055 L1615.3 1055 Z" fill="#f6c530"/><circle cx="1616" cy="1057.3" r="1.2" fill="#f6c530"/>
</g><g transform="translate(2183.9,236.3) scale(1.16) translate(-1616,-490)"><circle cx="1616" cy="490" r="10.8" fill="none" stroke="#f06a5c" stroke-width="2.5"/><path d="M1614.4 484.4 L1617.6 484.4 L1616.9 492 L1615.1 492 Z" fill="#f06a5c"/><circle cx="1616" cy="494.7" r="1.7" fill="#f06a5c"/>
</g><g transform="translate(2343.7,235.9) scale(1.2) translate(-1616,-1218)"><path d="M1608.6 1213 L1605.2 1218 L1608.6 1223 M1623.4 1213 L1626.8 1218 L1623.4 1223" fill="none" stroke="#f06a5c" stroke-width="2.7" stroke-linecap="round" stroke-linejoin="miter"/><circle cx="1611.6" cy="1218" r="1.6" fill="#f06a5c"/><circle cx="1616" cy="1218" r="1.6" fill="#f06a5c"/><circle cx="1620.4" cy="1218" r="1.6" fill="#f06a5c"/>
</g><g transform="translate(0.00,0.00)" fill="none" stroke="#1ea7f7" stroke-width="2.5" stroke-linecap="round" stroke-linejoin="round"><path d="M1612.6 323.6 L1611 318 L1605.8 315.8 M1611 318 L1609.7 312.3 M1611 318 L1614.9 313.3"/><path d="M1618.9 332.2 L1620.5 327 L1617 322.4 M1620.5 327 L1621.9 321.3 M1620.5 327 L1626 324.7"/></g>
<g transform="translate(0.00,-0.30)" fill="none" stroke="#c5cddc" stroke-width="2" stroke-linecap="round" stroke-linejoin="round"><ellipse cx="1613.8" cy="369.6" rx="7.6" ry="3"/><path d="M1606.2 369.6 V386 C1606.2 390 1621.4 390 1621.4 386 V369.6"/><path d="M1610.6 374.5 V388.5 M1616.8 374.5 V382 M1610.6 382 H1613.5"/><path d="M1621.6 375 L1623.5 371.8 C1624.5 370.5 1627.2 371.5 1626.4 373.6 L1621.5 384"/></g>
<g transform="translate(0.00,55.70)" fill="none" stroke="#c5cddc" stroke-width="2" stroke-linecap="round" stroke-linejoin="round"><ellipse cx="1613.8" cy="369.6" rx="7.6" ry="3"/><path d="M1606.2 369.6 V386 C1606.2 390 1621.4 390 1621.4 386 V369.6"/><path d="M1610.6 374.5 V388.5 M1616.8 374.5 V382 M1610.6 382 H1613.5"/><path d="M1621.6 375 L1623.5 371.8 C1624.5 370.5 1627.2 371.5 1626.4 373.6 L1621.5 384"/></g>
<circle cx="1616" cy="489.9" r="10.8" fill="none" stroke="#f06a5c" stroke-width="2.5"/><path d="M1614.4 484.29999999999995 L1617.6 484.29999999999995 L1616.9 491.9 L1615.1 491.9 Z" fill="#f06a5c"/><circle cx="1616" cy="494.59999999999997" r="1.7" fill="#f06a5c"/>
<circle cx="1616" cy="545.9" r="10.8" fill="none" stroke="#f06a5c" stroke-width="2.5"/><path d="M1614.4 540.3 L1617.6 540.3 L1616.9 547.9 L1615.1 547.9 Z" fill="#f06a5c"/><circle cx="1616" cy="550.6" r="1.7" fill="#f06a5c"/>
<circle cx="1616" cy="601.9" r="10.8" fill="none" stroke="#f06a5c" stroke-width="2.5"/><path d="M1614.4 596.3 L1617.6 596.3 L1616.9 603.9 L1615.1 603.9 Z" fill="#f06a5c"/><circle cx="1616" cy="606.6" r="1.7" fill="#f06a5c"/>
<g transform="translate(0.00,0.00)"><path d="M1608.6 646.6 L1608.6 666.6 L1613.2 662 L1615.5 669.2 L1620.4 667.3 L1617.8 660.6 L1623.4 660.6 Z" fill="none" stroke="#c5cddc" stroke-width="2.2" stroke-linejoin="miter"/></g>
<g transform="translate(0.00,56.00)"><path d="M1608.6 646.6 L1608.6 666.6 L1613.2 662 L1615.5 669.2 L1620.4 667.3 L1617.8 660.6 L1623.4 660.6 Z" fill="none" stroke="#c5cddc" stroke-width="2.2" stroke-linejoin="miter"/></g>
<g transform="translate(0.00,448.00)" fill="none" stroke="#1ea7f7" stroke-width="2.5" stroke-linecap="round" stroke-linejoin="round"><path d="M1612.6 323.6 L1611 318 L1605.8 315.8 M1611 318 L1609.7 312.3 M1611 318 L1614.9 313.3"/><path d="M1618.9 332.2 L1620.5 327 L1617 322.4 M1620.5 327 L1621.9 321.3 M1620.5 327 L1626 324.7"/></g>
<g transform="translate(0.00,168.00)"><path d="M1608.6 646.6 L1608.6 666.6 L1613.2 662 L1615.5 669.2 L1620.4 667.3 L1617.8 660.6 L1623.4 660.6 Z" fill="none" stroke="#c5cddc" stroke-width="2.2" stroke-linejoin="miter"/></g>
<g transform="translate(0.00,560.00)" fill="none" stroke="#1ea7f7" stroke-width="2.5" stroke-linecap="round" stroke-linejoin="round"><path d="M1612.6 323.6 L1611 318 L1605.8 315.8 M1611 318 L1609.7 312.3 M1611 318 L1614.9 313.3"/><path d="M1618.9 332.2 L1620.5 327 L1617 322.4 M1620.5 327 L1621.9 321.3 M1620.5 327 L1626 324.7"/></g>
<g transform="translate(0.00,559.70)" fill="none" stroke="#c5cddc" stroke-width="2" stroke-linecap="round" stroke-linejoin="round"><ellipse cx="1613.8" cy="369.6" rx="7.6" ry="3"/><path d="M1606.2 369.6 V386 C1606.2 390 1621.4 390 1621.4 386 V369.6"/><path d="M1610.6 374.5 V388.5 M1616.8 374.5 V382 M1610.6 382 H1613.5"/><path d="M1621.6 375 L1623.5 371.8 C1624.5 370.5 1627.2 371.5 1626.4 373.6 L1621.5 384"/></g>
<g transform="translate(0.00,336.00)"><path d="M1608.6 646.6 L1608.6 666.6 L1613.2 662 L1615.5 669.2 L1620.4 667.3 L1617.8 660.6 L1623.4 660.6 Z" fill="none" stroke="#c5cddc" stroke-width="2.2" stroke-linejoin="miter"/></g>
<path d="M1616 1041.2 L1625.8 1059.6 L1606.2 1059.6 Z" fill="none" stroke="#f6c530" stroke-width="2.5" stroke-linejoin="round"/><path d="M1615 1048.2 L1617 1048.2 L1616.7 1055.0 L1615.3 1055.0 Z" fill="#f6c530"/><circle cx="1616" cy="1057.3" r="1.2" fill="#f6c530"/>
<circle cx="1616" cy="1105.9" r="10.8" fill="none" stroke="#f06a5c" stroke-width="2.5"/><path d="M1614.4 1100.3000000000002 L1617.6 1100.3000000000002 L1616.9 1107.9 L1615.1 1107.9 Z" fill="#f06a5c"/><circle cx="1616" cy="1110.6000000000001" r="1.7" fill="#f06a5c"/>
<circle cx="1616" cy="1161.9" r="10.8" fill="none" stroke="#f06a5c" stroke-width="2.5"/><path d="M1614.4 1156.3000000000002 L1617.6 1156.3000000000002 L1616.9 1163.9 L1615.1 1163.9 Z" fill="#f06a5c"/><circle cx="1616" cy="1166.6000000000001" r="1.7" fill="#f06a5c"/>
<path d="M1608.6 1213.0 L1605.2 1218.0 L1608.6 1223.0 M1623.4 1213.0 L1626.8 1218.0 L1623.4 1223.0" fill="none" stroke="#f06a5c" stroke-width="2.7" stroke-linecap="round" stroke-linejoin="miter"/><circle cx="1611.6" cy="1218.0" r="1.6" fill="#f06a5c"/><circle cx="1616" cy="1218.0" r="1.6" fill="#f06a5c"/><circle cx="1620.4" cy="1218.0" r="1.6" fill="#f06a5c"/>
<circle cx="1616" cy="1273.9" r="10.8" fill="none" stroke="#f06a5c" stroke-width="2.5"/><path d="M1614.4 1268.3000000000002 L1617.6 1268.3000000000002 L1616.9 1275.9 L1615.1 1275.9 Z" fill="#f06a5c"/><circle cx="1616" cy="1278.6000000000001" r="1.7" fill="#f06a5c"/>
<circle cx="1616" cy="1330.0" r="10.8" fill="none" stroke="#10c48a" stroke-width="2.5"/><path d="M1612.2 1325.4 L1620.3 1330.0 L1612.2 1334.6 Z" fill="#10c48a" stroke="#10c48a" stroke-width="0.8" stroke-linejoin="round"/>
<path d="M1458 762 L1474 770 L1458 778 Z" fill="#f3f6fa"/>
<circle cx="2800" cy="1510" r="32" fill="#868fa1"/><path d="M2794.3 1505.2 C2794.3 1501.6 2797 1499.8 2800.1 1499.8 C2803.4 1499.8 2806.1 1501.9 2806.1 1505 C2806.1 1508.2 2803.5 1509.3 2801.8 1510.7 C2800.6 1511.7 2800.1 1512.8 2800.1 1514.8" fill="none" stroke="#fff" stroke-width="3.2" stroke-linecap="round"/><circle cx="2800.1" cy="1519.8" r="2.3" fill="#fff"/>
</svg>
</div></body></html>
